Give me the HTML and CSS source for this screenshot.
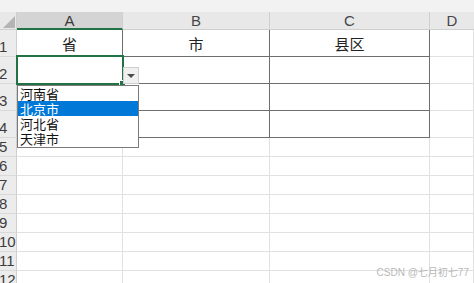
FILE: index.html
```html
<!DOCTYPE html>
<html>
<head>
<meta charset="utf-8">
<link rel="stylesheet" href="styles.css">
</head>
<body>
<div class="app">
  <div class="strip"></div>
  <div class="sheet">
    <div class="corner"><svg width="17" height="18" viewBox="0 0 17 18"><polygon points="3,16 15,16 15,4" fill="#b4b4b4"/></svg></div>
    <div class="ch ch-sel">A</div>
    <div class="ch">B</div>
    <div class="ch">C</div>
    <div class="ch ch-last">D</div>

    <div class="rh">1</div>
    <div class="c t">省</div>
    <div class="c t">市</div>
    <div class="c t">县区</div>
    <div class="c tb"></div>

    <div class="rh">2</div>
    <div class="c t"></div>
    <div class="c t"></div>
    <div class="c t"></div>
    <div class="c tb"></div>

    <div class="rh">3</div>
    <div class="c t"></div>
    <div class="c t"></div>
    <div class="c t"></div>
    <div class="c tb"></div>

    <div class="rh">4</div>
    <div class="c t"></div>
    <div class="c t"></div>
    <div class="c t"></div>
    <div class="c tb"></div>

    <div class="rh">5</div><div class="c"></div><div class="c"></div><div class="c"></div><div class="c"></div>
    <div class="rh">6</div><div class="c"></div><div class="c"></div><div class="c"></div><div class="c"></div>
    <div class="rh">7</div><div class="c"></div><div class="c"></div><div class="c"></div><div class="c"></div>
    <div class="rh">8</div><div class="c"></div><div class="c"></div><div class="c"></div><div class="c"></div>
    <div class="rh">9</div><div class="c"></div><div class="c"></div><div class="c"></div><div class="c"></div>
    <div class="rh">10</div><div class="c"></div><div class="c"></div><div class="c"></div><div class="c"></div>
    <div class="rh">11</div><div class="c"></div><div class="c"></div><div class="c"></div><div class="c"></div>
    <div class="rh">12</div><div class="c"></div><div class="c"></div><div class="c"></div><div class="c"></div>
  </div>

  <div class="selection"><span class="handle"></span></div>
  <div class="dd-btn"><span class="tri"></span></div>
  <ul class="dd-list">
    <li>河南省</li>
    <li class="active">北京市</li>
    <li>河北省</li>
    <li>天津市</li>
  </ul>
  <div class="watermark">CSDN @七月初七77</div>
</div>
</body>
</html>
```
FILE: styles.css
```css
html, body {
  margin: 0;
  padding: 0;
  background: #ffffff;
}
.app {
  position: relative;
  width: 474px;
  height: 283px;
  overflow: hidden;
  font-family: "Liberation Sans", "Noto Sans CJK SC", sans-serif;
}
.strip {
  height: 12px;
  background: #f2f2f2;
}
.sheet {
  display: grid;
  grid-template-columns: 17px 106px 147px 160px 44px;
  grid-template-rows: 18px 27px 27px 27px 27px;
  grid-auto-rows: 19px;
}
.sheet > div {
  box-sizing: border-box;
}
.corner {
  background: #e8e8e8;
  border-right: 1px solid #cfcfcf;
  border-bottom: 1px solid #cfcfcf;
  overflow: hidden;
}
.corner svg { display: block; }
.ch {
  background: #e8e8e8;
  border-right: 1px solid #cfcfcf;
  border-bottom: 1px solid #cfcfcf;
  display: flex;
  align-items: center;
  justify-content: center;
  font-size: 15px;
  color: #474747;
}
.ch-sel {
  background: #d4d4d4;
  border-bottom: 2px solid #217346;
  color: #3b3b3b;
}
.ch-last { border-right: none; }
.rh {
  background: #ececec;
  border-right: 1px solid #cfcfcf;
  border-bottom: 1px solid #d9d9d9;
  font-size: 15px;
  color: #3c3c3c;
  display: flex;
  align-items: flex-end;
  padding-bottom: 1px;
  overflow: hidden;
  text-indent: -1px;
  line-height: 16px;
}
.c {
  border-right: 1px solid #e1e1e1;
  border-bottom: 1px solid #e1e1e1;
}
.t {
  border-right: 1px solid #6e6e6e;
  border-bottom: 1px solid #6e6e6e;
  display: flex;
  align-items: flex-end;
  justify-content: center;
  padding-bottom: 4px;
  font-family: "Noto Sans CJK SC", sans-serif;
  font-size: 15px;
  line-height: 16px;
  color: #222;
}
.tb { border-bottom: 1px solid #e1e1e1; }

.selection {
  position: absolute;
  left: 16px;
  top: 55px;
  width: 108px;
  height: 30px;
  box-sizing: border-box;
  border: 2px solid #217346;
}
.handle {
  position: absolute;
  right: -4px;
  bottom: -4px;
  width: 5px;
  height: 5px;
  background: #217346;
  border: 1px solid #fff;
}
.dd-btn {
  position: absolute;
  left: 123px;
  top: 67px;
  width: 16px;
  height: 17px;
  box-sizing: border-box;
  background: #f0f0f0;
  border: 1px solid #cfcfcf;
  display: flex;
  align-items: center;
  justify-content: center;
}
.tri {
  width: 0;
  height: 0;
  border-left: 4px solid transparent;
  border-right: 4px solid transparent;
  border-top: 4px solid #4a4a4a;
}
.dd-list {
  position: absolute;
  left: 17px;
  top: 85px;
  width: 122px;
  margin: 0;
  padding: 0 0 1px 0;
  list-style: none;
  box-sizing: border-box;
  background: #fff;
  border: 1px solid #7a7a7a;
  font-family: "Noto Sans CJK SC", sans-serif;
  font-size: 13px;
  color: #111;
}
.dd-list li {
  height: 15px;
  display: flex;
  align-items: center;
  line-height: 1;
  padding-left: 2px;
}
.dd-list li.active {
  background: #0078d7;
  color: #fff;
}
.watermark {
  position: absolute;
  right: 5px;
  bottom: 4px;
  font-family: "Liberation Sans", "Noto Sans CJK SC", sans-serif;
  font-size: 10px;
  color: #b8b8b8;
}
```
